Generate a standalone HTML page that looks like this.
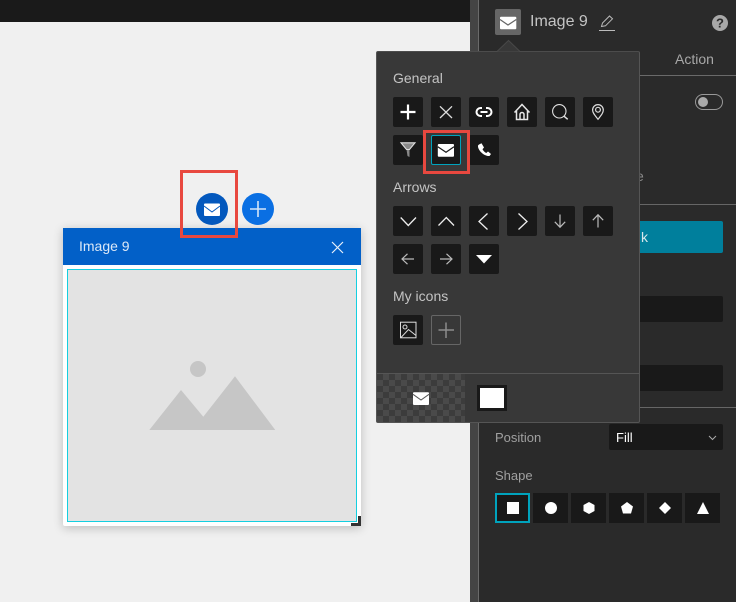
<!DOCTYPE html>
<html><head><meta charset="utf-8">
<style>
html,body{margin:0;padding:0;background:#f0f0f0}
#p{position:relative;width:736px;height:602px;overflow:hidden;font-family:"Liberation Sans",sans-serif}
#p div{position:absolute;box-sizing:border-box}
.t{background:#191919;width:30px;height:30px;border-radius:2px}
.t svg{position:absolute;left:0;top:0;width:30px;height:30px}
.l{color:#c4c4c4;font-size:14px;line-height:18px;white-space:nowrap}
.s{background:#191919;width:35px;height:30px}
.s svg{position:absolute;left:0;top:0;width:35px;height:30px}
svg{display:block;overflow:visible}
</style></head><body><div id="p">

<div style="left:0;top:0;width:470px;height:22px;background:#1a1a1a"></div>
<div style="left:470px;top:0;width:8px;height:602px;background:#444"></div>
<div style="left:478px;top:0;width:1px;height:602px;background:#6a6a6a"></div>
<div style="left:479px;top:0;width:257px;height:602px;background:#2a2a2a"></div>

<!-- header -->
<div style="left:495px;top:9px;width:26px;height:26px;background:#666;border-radius:2px"></div>
<svg style="position:absolute;left:495px;top:9px" width="26" height="26"><rect x="5" y="7.700" width="16.300" height="12.600" rx="1" fill="#fff"/><path d="M5 10.500L13 16L21.300 10.500" fill="none" stroke="#666" stroke-width="1.200"/></svg>
<div style="left:530px;top:12px;color:#c4c4c4;font-size:16px;line-height:20px;white-space:nowrap;font-weight:400">Image 9</div>
<svg style="position:absolute;left:598px;top:14px" width="18" height="18" fill="none" stroke="#bbb"><path d="M3.500 12.500L4.500 9L11.500 2L14.500 4.800L7.500 11.800Z" stroke-width="1"/><path d="M1 16.500H17" stroke-width="1"/></svg>
<svg style="position:absolute;left:712px;top:15px" width="16" height="16"><circle cx="8" cy="8" r="8" fill="#a8a8a8"/><text x="8" y="12.500" text-anchor="middle" font-family="Liberation Sans" font-weight="700" font-size="13" fill="#2a2a2a">?</text></svg>
<div class="l" style="left:675px;top:50px;color:#a8a8a8">Action</div>
<div style="left:479px;top:75px;width:257px;height:1px;background:#6a6a6a"></div>

<!-- toggle -->
<div style="left:695px;top:94px;width:28px;height:16px;border:1px solid #999;border-radius:8px"></div>
<div style="left:698px;top:97px;width:10px;height:10px;background:#aaa;border-radius:50%"></div>

<div class="l" style="left:636px;top:167px;color:#8a8a8a">e</div>
<div style="left:479px;top:204px;width:257px;height:1px;background:#666"></div>
<div style="left:600px;top:221px;width:123px;height:32px;background:#007f9c;border-radius:2px"></div>
<div class="l" style="left:641px;top:228px;color:#d6e8ec">k</div>
<div style="left:600px;top:296px;width:123px;height:26px;background:#191919;border-radius:2px"></div>
<div style="left:600px;top:365px;width:123px;height:26px;background:#191919;border-radius:2px"></div>
<div style="left:479px;top:407px;width:257px;height:1px;background:#666"></div>

<!-- position / shape -->
<div class="l" style="left:495px;top:429px;font-size:13px;color:#a0a0a0">Position</div>
<div style="left:609px;top:424px;width:114px;height:26px;background:#191919;border-radius:2px"></div>
<div class="l" style="left:616px;top:429px;font-size:13px;color:#fff">Fill</div>
<svg style="position:absolute;left:708px;top:435px" width="9" height="6" fill="none" stroke="#aaa" stroke-width="1"><path d="M1 1L4.500 4.500L8 1"/></svg>
<div class="l" style="left:495px;top:467px;font-size:13px;color:#a0a0a0">Shape</div>

<div class="s" style="left:495px;top:493px;border:2px solid #00a3bd"></div>
<svg style="position:absolute;left:495px;top:493px" width="35" height="30"><rect x="12" y="9" width="12" height="12" fill="#fff"/></svg>
<div class="s" style="left:533px;top:493px"><svg><circle cx="18" cy="15" r="6" fill="#fff"/></svg></div>
<div class="s" style="left:571px;top:493px"><svg><path d="M18 9L23.500 12V18L18 21L12.500 18V12Z" fill="#fff"/></svg></div>
<div class="s" style="left:609px;top:493px"><svg><path d="M18 9L24 13.500L22 20.500H14L12 13.500Z" fill="#fff"/></svg></div>
<div class="s" style="left:647px;top:493px"><svg><path d="M18 9L24 15L18 21L12 15Z" fill="#fff"/></svg></div>
<div class="s" style="left:685px;top:493px"><svg><path d="M18 9L24 21H12Z" fill="#fff"/></svg></div>

<!-- popover -->
<div style="left:376px;top:51px;width:264px;height:372px;background:#383838;border:1px solid #555;border-top-color:#4c4c4c;border-radius:2px"></div>
<svg style="position:absolute;left:496px;top:39px" width="26" height="14"><path d="M1 12.500L12.500 1.500L24 12.500" fill="#383838" stroke="#484848" stroke-width="1"/><path d="M1 13H24V14H1Z" fill="#383838"/></svg>

<div class="l" style="left:393px;top:69px">General</div>

<div class="t" style="left:393px;top:97px"><svg><path d="M15 7.500V22.500M7.500 15H22.500" stroke="#fff" stroke-width="2.200" fill="none"/></svg></div>
<div class="t" style="left:431px;top:97px"><svg><path d="M9 9.300L21 21M21 9.300L9 21" stroke="#ddd" stroke-width="1.300" fill="none"/></svg></div>
<div class="t" style="left:469px;top:97px"><svg fill="none" stroke="#fff" stroke-width="2"><path d="M13 11H11.500A3.800 3.800 0 0 0 11.500 19H13M17 11H18.500A3.800 3.800 0 0 1 18.500 19H17M11.500 15H18.500"/></svg></div>
<div class="t" style="left:507px;top:97px"><svg fill="none" stroke="#e6e6e6" stroke-width="1.500"><path d="M7.500 15.500L15 7.500L22.500 15.500M9.500 14V22.500H20.500V14M13 22.500V17.500A2 2 0 0 1 17 17.500V22.500"/></svg></div>
<div class="t" style="left:545px;top:97px"><svg fill="none" stroke="#e0e0e0" stroke-width="1.100"><circle cx="14.300" cy="14.300" r="6.700"/><path d="M19 19.200L22.700 22.300" stroke-width="1.500"/></svg></div>
<div class="t" style="left:583px;top:97px"><svg fill="none" stroke="#ddd" stroke-width="1.200"><path d="M15 22.300C12 18.500 9.600 16 9.600 13A5.300 5.300 0 0 1 20.300 13C20.300 16 18 18.500 15 22.300Z"/><circle cx="15" cy="12.700" r="2.400"/></svg></div>

<div class="t" style="left:393px;top:135px"><svg><path d="M8 7.800H22L16.500 14.500V22L14.500 21L13.500 14.500Z" fill="#888"/><path d="M8 7.800H22L16.500 14.500H13.500Z" fill="none" stroke="#e0e0e0" stroke-width="1.100"/></svg></div>
<div class="t" style="left:431px;top:135px;border:1px solid #00a3bd"></div>
<svg style="position:absolute;left:431px;top:135px" width="30" height="30"><rect x="6.800" y="9" width="16.200" height="12.700" rx="1" fill="#fff"/><path d="M6.800 11.700L15 17.300L23 11.700" fill="none" stroke="#191919" stroke-width="1.200"/></svg>
<div class="t" style="left:469px;top:135px"><svg><path d="M10 9.500L12.500 8.300L15 12.500L13.500 14.200C14.500 16 15.700 17.200 17.300 18L19 16.500L22 19L20.500 21C15 21.500 8.500 15 9 10.500Z" fill="#fff"/></svg></div>

<div class="l" style="left:393px;top:178px">Arrows</div>

<div class="t" style="left:393px;top:206px"><svg><path d="M7.700 11.500L15.300 19.500L23 11.500" fill="none" stroke="#eee" stroke-width="1.300"/></svg></div>
<div class="t" style="left:431px;top:206px"><svg><path d="M7.500 19.500L15.300 11.500L23 19.500" fill="none" stroke="#eee" stroke-width="1.300"/></svg></div>
<div class="t" style="left:469px;top:206px"><svg><path d="M18.500 7.500L10 15.500L18.500 23.500" fill="none" stroke="#eee" stroke-width="1.300"/></svg></div>
<div class="t" style="left:507px;top:206px"><svg><path d="M11.500 7.500L20 15.500L11.500 23.500" fill="none" stroke="#eee" stroke-width="1.300"/></svg></div>
<div class="t" style="left:545px;top:206px"><svg fill="none" stroke="#bbb" stroke-width="1.200"><path d="M15 8.500V21.200M9.800 15.800L15 21.200L20.200 15.800"/></svg></div>
<div class="t" style="left:583px;top:206px"><svg fill="none" stroke="#bbb" stroke-width="1.200"><path d="M15 21.500V8.800M9.800 14.200L15 8.800L20.200 14.200"/></svg></div>

<div class="t" style="left:393px;top:244px"><svg fill="none" stroke="#bbb" stroke-width="1.200"><path d="M21 15H9M14.500 9.800L9 15L14.500 20.200"/></svg></div>
<div class="t" style="left:431px;top:244px"><svg fill="none" stroke="#bbb" stroke-width="1.200"><path d="M9 15H21M15.500 9.800L21 15L15.500 20.200"/></svg></div>
<div class="t" style="left:469px;top:244px"><svg><path d="M7 11H23L15 19.500Z" fill="#fff"/></svg></div>

<div class="l" style="left:393px;top:287px">My icons</div>

<div class="t" style="left:393px;top:315px"><svg fill="none" stroke="#ddd" stroke-width="1"><rect x="7.500" y="7.200" width="15.500" height="15.600"/><circle cx="12" cy="12" r="2"/><path d="M8 22.500L15.500 14.500L23 20.500"/></svg></div>
<div style="left:431px;top:315px;width:30px;height:30px;border:1px solid #666;border-radius:2px"></div>
<svg style="position:absolute;left:431px;top:315px" width="30" height="30"><path d="M15 7.500V23M7.500 15H23" stroke="#8c8c8c" stroke-width="1.500" fill="none"/></svg>

<div style="left:377px;top:373px;width:262px;height:1px;background:#555"></div>
<div style="left:377px;top:374px;width:88px;height:48px;background:repeating-conic-gradient(#4a4a4a 0 25%,#3c3c3c 0 50%) 0 0/12px 12px"></div>
<svg style="position:absolute;left:413px;top:392px" width="16" height="13"><rect y=".3" width="16" height="12.700" rx="1" fill="#fff"/><path d="M0 2.300L8 8L16 2.300" fill="none" stroke="#555" stroke-width="1"/></svg>
<div style="left:477px;top:385px;width:30px;height:26px;background:#191919"></div>
<div style="left:480px;top:388px;width:24px;height:20px;background:#fff"></div>

<!-- canvas widget -->
<div style="left:63px;top:228px;width:298px;height:298px;background:#fff;border-radius:0 0 2px 2px;box-shadow:0 2px 10px rgba(0,0,0,.22)"></div>
<div style="left:63px;top:228px;width:298px;height:37px;background:#0260c8"></div>
<div style="left:79px;top:237px;color:#dbe8f7;font-size:14px;line-height:18px;white-space:nowrap">Image 9</div>
<svg style="position:absolute;left:331px;top:241px" width="13" height="13"><path d="M1 1L12 12M12 1L1 12" stroke="#e8f0fa" stroke-width="1.200" fill="none"/></svg>
<div style="left:67px;top:269px;width:290px;height:253px;background:#e3e3e3;border:1px solid #14cfe0"></div>
<svg style="position:absolute;left:140px;top:355px" width="145" height="85"><circle cx="58" cy="14" r="8" fill="#c6c6c6"/><path d="M9.300 75L41 35L63.300 61.700L95 21.300L135.300 75Z" fill="#c6c6c6"/></svg>
<svg style="position:absolute;left:351px;top:516px" width="10" height="10"><path d="M7 0H10V10H0V7H7Z" fill="#333"/></svg>

<!-- buttons -->
<div style="left:196px;top:193px;width:32px;height:32px;background:#0358bd;border-radius:50%"></div>
<svg style="position:absolute;left:204px;top:202px" width="16" height="14"><rect y="1.500" width="16" height="12.500" rx="1" fill="#fff"/><path d="M0 4L8 10L16 4" fill="none" stroke="#0358bd" stroke-width="1"/></svg>
<div style="left:242px;top:193px;width:32px;height:32px;background:#0a6fe3;border-radius:50%"></div>
<svg style="position:absolute;left:242px;top:193px" width="32" height="32"><path d="M16 8V24M8 16H24" stroke="#d5e5f9" stroke-width="1.600" fill="none"/></svg>

<!-- red boxes -->
<div style="left:180px;top:170px;width:58px;height:68px;border:3px solid #e8483f"></div>
<div style="left:423px;top:130px;width:47px;height:44px;border:3px solid #e8483f"></div>

</div></body></html>
